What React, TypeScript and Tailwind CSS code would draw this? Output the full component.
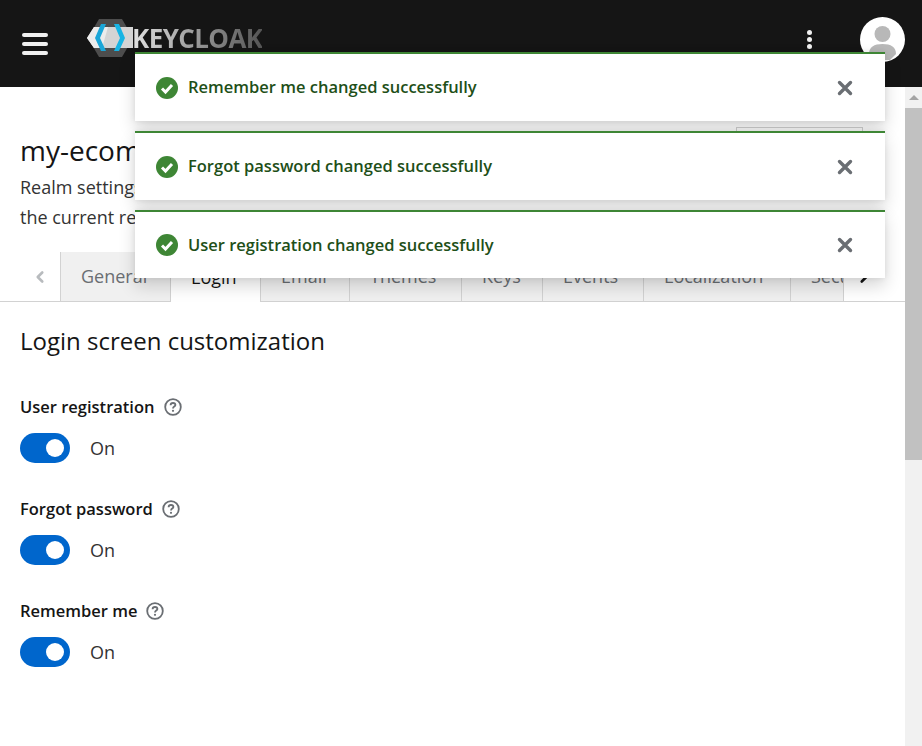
import { ChevronLeft, ChevronRight } from 'lucide-react'

const TABS = [
  { label: 'General', width: 'w-[111px]' },
  { label: 'Login', width: 'w-[90px]', active: true },
  { label: 'Email', width: 'w-[89px]' },
  { label: 'Themes', width: 'w-[112px]' },
  { label: 'Keys', width: 'w-[81px]' },
  { label: 'Events', width: 'w-[101px]' },
  { label: 'Localization', width: 'w-[147px]' },
  { label: 'Security defenses', width: 'w-[53px]' },
]

const TOASTS = [
  { text: 'Remember me changed successfully', height: 'h-[69px]' },
  { text: 'Forgot password changed successfully', height: 'h-[69px]' },
  { text: 'User registration changed successfully', height: 'h-[68px]' },
]

const SWITCHES = ['User registration', 'Forgot password', 'Remember me']

function Logo() {
  return (
    <div className="flex items-center">
      <svg width="48" height="40" viewBox="0 0 48 40" className="shrink-0">
        <polygon points="13,1 36,1 47,20 36,39 13,39 2,20" fill="#4d4d4d" />
        <polygon points="1,20 8,9 47,9 47,30 8,30" fill="#d4d4d4" />
        <polygon points="1,20 8,9 22,9 16,30 8,30" fill="#ececec" />
        <path d="M15 6 L9 20 L15 33 L20 33 L14 20 L20 6 Z" fill="#1aa6d8" />
        <path d="M28 6 L34 20 L28 33 L33 33 L39 20 L33 6 Z" fill="#17b4e4" />
      </svg>
      <span className="-ml-[2px] bg-gradient-to-r from-[#e2e2e2] to-[#555555] bg-clip-text font-['Open_Sans',sans-serif] text-[26px] font-bold leading-none tracking-[-0.6px] text-transparent">
        KEYCLOAK
      </span>
    </div>
  )
}

function Header() {
  return (
    <header className="flex h-[87px] shrink-0 items-center bg-[#151515] pl-[22px] pr-[17px]">
      <div className="flex w-[26px] flex-col gap-[5px]">
        <span className="h-1 rounded-sm bg-[#f0f0f0]" />
        <span className="h-1 rounded-sm bg-[#f0f0f0]" />
        <span className="h-1 rounded-sm bg-[#f0f0f0]" />
      </div>
      <div className="ml-[38px] -mt-[12px]">
        <Logo />
      </div>
      <div className="ml-auto -mt-[8px] flex items-center gap-[48px]">
        <div className="flex flex-col gap-[2px]">
          <span className="size-[5px] rounded-full bg-[#f0f0f0]" />
          <span className="size-[5px] rounded-full bg-[#f0f0f0]" />
          <span className="size-[5px] rounded-full bg-[#f0f0f0]" />
        </div>
        <svg width="45" height="45" viewBox="0 0 45 45">
          <circle cx="22.5" cy="22.5" r="22.5" fill="#fff" />
          <circle cx="22.5" cy="17" r="8" fill="#b8b8b8" />
          <path d="M9 37 C9 30 14 27 22.5 27 C31 27 36 30 36 37 L30 43 L15 43 Z" fill="#b8b8b8" />
        </svg>
      </div>
    </header>
  )
}

function Toasts() {
  return (
    <div className="absolute left-[135px] top-[52px] flex w-[750px] flex-col gap-[10px]">
      {TOASTS.map((t) => (
        <div
          key={t.text}
          className={`flex items-center border-t-2 border-[#3e8635] bg-white pl-[21px] pr-[32px] shadow-[0_8px_16px_0_rgba(3,3,3,0.16),0_0_6px_0_rgba(3,3,3,0.08)] ${t.height}`}
        >
          <svg width="22" height="22" viewBox="0 0 22 22" className="shrink-0">
            <circle cx="11" cy="11" r="11" fill="#3e8635" />
            <path d="M6 11.5 L9.5 15 L16 8" fill="none" stroke="#fff" strokeWidth="3" />
          </svg>
          <span className="ml-[10px] font-['Open_Sans',sans-serif] text-[16.5px] font-semibold text-[#1e4f18]">
            {t.text}
          </span>
          <svg width="16" height="16" viewBox="0 0 16 16" className="ml-auto shrink-0">
            <path d="M2.5 2.5 L13.5 13.5 M13.5 2.5 L2.5 13.5" stroke="#6a6e73" strokeWidth="3.4" strokeLinecap="round" />
          </svg>
        </div>
      ))}
    </div>
  )
}

function TabBar() {
  return (
    <div className="flex h-[50px] border-b border-[#d2d2d2] pl-5">
      <div className="flex w-10 items-center justify-center text-[#b8bbbe]">
        <ChevronLeft size={18} strokeWidth={3.5} />
      </div>
      {TABS.map((tab) => (
        <div
          key={tab.label}
          className={`flex h-[50px] items-center overflow-hidden border-r border-[#d2d2d2] pl-5 text-[18px] whitespace-nowrap ${tab.width} ${
            tab.active ? 'bg-white text-[#151515]' : 'border-b border-b-[#d2d2d2] bg-[#f0f0f0] text-[#6a6e73]'
          } ${tab.label === 'General' ? 'border-l' : ''}`}
        >
          {tab.label}
        </div>
      ))}
      <div className="flex w-10 items-center justify-center text-[#151515]">
        <ChevronRight size={18} strokeWidth={3.5} />
      </div>
    </div>
  )
}

function HelpIcon() {
  return (
    <svg width="18" height="18" viewBox="0 0 18 18" className="shrink-0">
      <circle cx="9" cy="9" r="7.8" fill="none" stroke="#6a6e73" strokeWidth="1.8" />
      <path d="M6.6 7.2 C6.6 5.8 7.7 5 9 5 C10.4 5 11.4 5.9 11.4 7 C11.4 8.6 9 8.6 9 10.4" fill="none" stroke="#6a6e73" strokeWidth="1.8" />
      <circle cx="9" cy="12.8" r="1.1" fill="#6a6e73" />
    </svg>
  )
}

function SwitchRow({ label }: { label: string }) {
  return (
    <div>
      <div className="flex h-[24px] items-center gap-[9px]">
        <span className="text-[16.5px] font-semibold text-[#151515]">{label}</span>
        <HelpIcon />
      </div>
      <div className="mt-[14px] flex items-center gap-5">
        <div className="flex h-[30px] w-[50px] items-center justify-end rounded-full bg-[#06c] pr-[6px]">
          <span className="size-[18px] rounded-full bg-white" />
        </div>
        <span className="text-[18px] text-[#333]">On</span>
      </div>
    </div>
  )
}

export default function App() {
  return (
    <div className="relative flex h-[746px] w-[922px] flex-col overflow-hidden bg-white font-['Open_Sans',sans-serif]">
      <Header />
      <div className="flex min-h-0 flex-1">
        <main className="min-w-0 flex-1">
          <div className="relative h-[165px] px-5 pt-[44px]">
            <div className="absolute left-[736px] top-[40px] h-[36px] w-[127px] border border-[#d2d2d2]" />
            <h1 className="text-[28px] leading-[38px] text-[#151515]">my-ecommerce</h1>
            <p className="mt-[3px] text-[18px] leading-[30px] text-[#333] whitespace-nowrap">
              Realm settings are settings that control the options for users, applications
            </p>
            <p className="text-[18px] leading-[30px] text-[#333] whitespace-nowrap">
              the current realm. <span className="text-[#06c]">Learn more</span>
            </p>
          </div>
          <TabBar />
          <section className="px-5">
            <h2 className="mt-[22px] text-[24px] leading-[34px] text-[#151515]">Login screen customization</h2>
            <div className="mt-[37px] flex flex-col gap-[34px]">
              {SWITCHES.map((label) => (
                <SwitchRow key={label} label={label} />
              ))}
            </div>
          </section>
        </main>
        <div className="flex w-[17px] shrink-0 flex-col bg-[#f1f1f1]">
          <div className="flex h-[21px] items-center justify-center">
            <span className="border-x-[5px] border-b-[5px] border-x-transparent border-b-[#a3a3a3]" />
          </div>
          <div className="h-[352px] bg-[#c1c1c1]" />
        </div>
      </div>
      <Toasts />
    </div>
  )
}
